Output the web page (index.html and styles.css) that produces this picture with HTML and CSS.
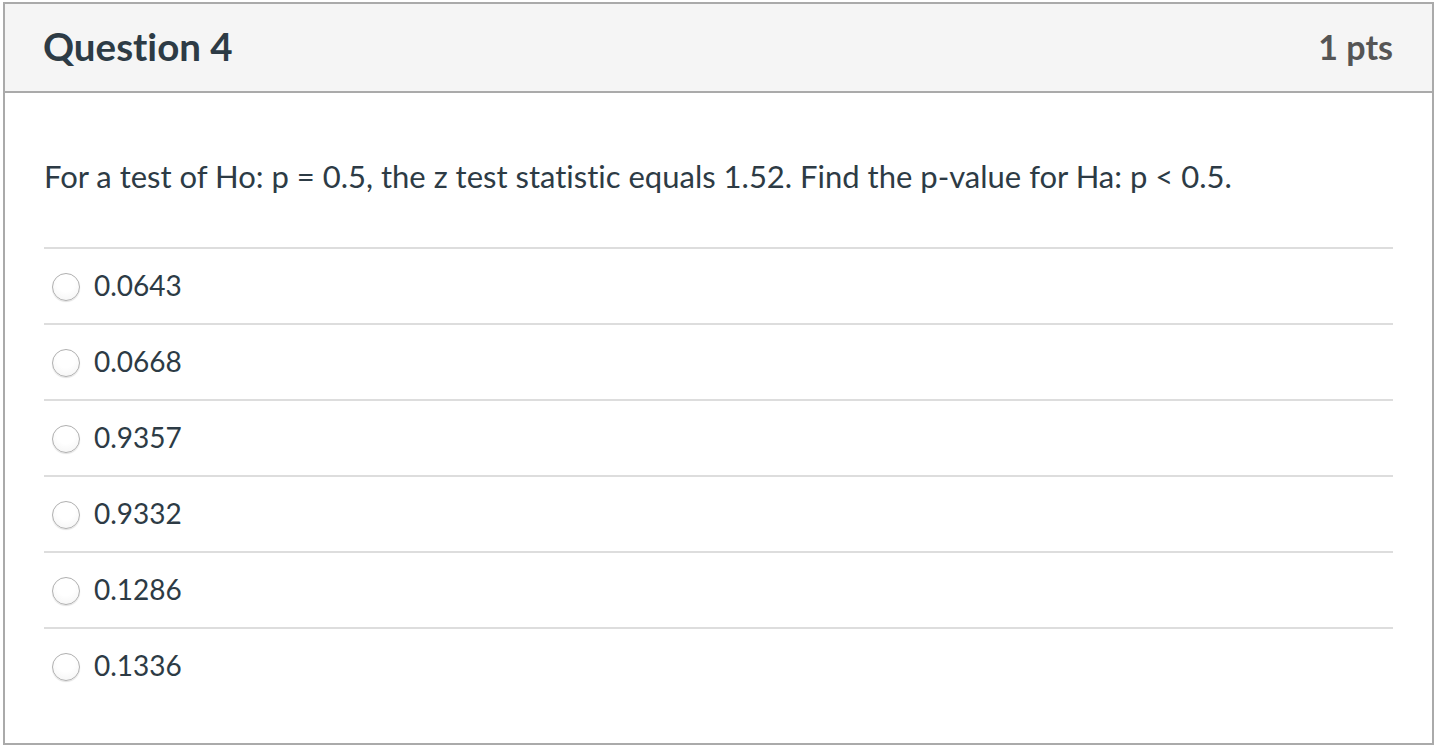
FILE: index.html
```html
<!DOCTYPE html>
<html>
<head>
<meta charset="utf-8">
<link rel="stylesheet" href="styles.css">
</head>
<body>
<div class="card">
  <div class="header">
    <h2 class="title">Question 4</h2>
    <div class="pts">1 pts</div>
  </div>
  <div class="body">
    <p class="question">For a test of Ho: p = 0.5, the z test statistic equals 1.52. Find the p-value for Ha: p &lt; 0.5.</p>
    <div class="answers">
      <label class="answer"><span class="radio"></span><span class="label">0.0643</span></label>
      <label class="answer"><span class="radio"></span><span class="label">0.0668</span></label>
      <label class="answer"><span class="radio"></span><span class="label">0.9357</span></label>
      <label class="answer"><span class="radio"></span><span class="label">0.9332</span></label>
      <label class="answer"><span class="radio"></span><span class="label">0.1286</span></label>
      <label class="answer"><span class="radio"></span><span class="label">0.1336</span></label>
    </div>
  </div>
</div>
</body>
</html>
```
FILE: styles.css
```css
html, body { margin: 0; padding: 0; background: #fff; }
body {
  font-family: Lato, "Noto Sans", sans-serif;
  color: #2d3b45;
  font-variant-ligatures: none;
}
.card {
  box-sizing: border-box;
  width: 1431px;
  height: 743px;
  margin: 2px 0 0 3px;
  border: 2px solid #aaaaaa;
  display: flex;
  flex-direction: column;
}
.header {
  box-sizing: border-box;
  height: 89px;
  background: #f5f5f5;
  border-bottom: 2px solid #aaaaaa;
  display: flex;
  align-items: center;
  justify-content: space-between;
  padding: 0 39px 3px 38px;
}
.title {
  margin: 0;
  font-size: 38.5px;
  font-weight: 700;
  color: #2d3b45;
}
.pts {
  font-size: 34px;
  font-weight: 700;
  color: #555555;
}
.body { padding: 0 39px 0 39px; }
.question {
  margin: 63px 0 0 0;
  height: 91px;
  font-size: 31px;
  line-height: 40px;
}
.answer {
  box-sizing: border-box;
  height: 76px;
  border-top: 2px solid #dddddd;
  display: flex;
  align-items: center;
  gap: 14px;
  padding-left: 8px;
  padding-bottom: 2px;
}
.radio {
  box-sizing: border-box;
  width: 28px;
  height: 28px;
  margin-top: 4px;
  border-radius: 50%;
  border: 1.5px solid #b0b0b0;
  background: radial-gradient(circle at 50% 35%, #ffffff 40%, #f2f2f2 100%);
  box-shadow: 0 1px 1px rgba(0,0,0,0.12);
}
.label { font-size: 28px; }
```
